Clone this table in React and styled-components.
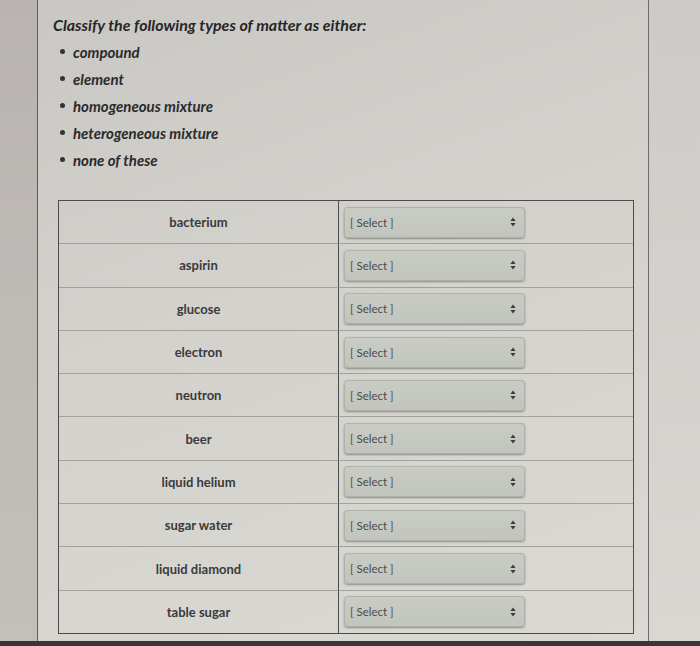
import React from "react";
import styled, { createGlobalStyle } from "styled-components";

const Global = createGlobalStyle`
  html, body { margin: 0; padding: 0; }
  body {
    width: 700px;
    height: 646px;
    overflow: hidden;
    font-family: Lato, "Open Sans", sans-serif;
    background: linear-gradient(160deg, #c9c7c3 0%, #d3d1cc 40%, #dbd9d4 100%);
  }
`;

const Screen = styled.div`
  width: 700px;
  height: 646px;
  display: flex;
  flex-direction: column;
`;

const Row = styled.div`
  flex: 1;
  display: flex;
  min-height: 0;
`;

const Rail = styled.div`
  width: 37px;
  flex: none;
  background: linear-gradient(180deg, #b9b4b1 0%, #c3c0bb 100%);
  border-right: 1px solid #5e5a58;
`;

const Main = styled.div`
  width: 611px;
  flex: none;
  border-right: 1px solid #6e6c6a;
  padding: 15px 0 0 15px;
  box-sizing: border-box;
`;

const Gutter = styled.div`
  flex: 1;
  background: linear-gradient(180deg, #cdcbc7 0%, #d9d7d2 100%);
`;

const BottomBar = styled.div`
  height: 5px;
  background: #3a3634;
`;

const Heading = styled.div`
  font-weight: 700;
  font-style: italic;
  font-size: 16px;
  line-height: 20px;
  color: #262628;
`;

const List = styled.ul`
  list-style: none;
  margin: 3px 0 0 0;
  padding: 0 0 0 7px;
`;

const Item = styled.li`
  display: flex;
  align-items: center;
  gap: 8px;
  height: 27px;
  font-weight: 700;
  font-style: italic;
  font-size: 15px;
  color: #2a2a2c;
  &::before {
    content: "";
    width: 5px;
    height: 5px;
    border-radius: 50%;
    background: #333;
  }
`;

const Table = styled.div`
  margin: 27px 0 0 5px;
  width: 574px;
  border: 1px solid #4e4c4a;
  display: grid;
  grid-template-columns: 280px 1fr;
`;

const NameCell = styled.div`
  height: 42.3px;
  display: flex;
  align-items: center;
  justify-content: center;
  font-size: 13px;
  font-weight: 700;
  color: #3a3a3c;
  border-right: 1px solid #4e4c4a;
  border-top: ${(p) => (p.$first ? "none" : "1px solid #a3a19d")};
`;

const SelectCell = styled.div`
  height: 42.3px;
  display: flex;
  align-items: center;
  padding-left: 5px;
  border-top: ${(p) => (p.$first ? "none" : "1px solid #a3a19d")};
`;

const SelectBox = styled.div`
  width: 181px;
  height: 31px;
  box-sizing: border-box;
  border-radius: 4px;
  background: linear-gradient(180deg, #c9ccc4 0%, #c2c5bd 100%);
  box-shadow: 0 1px 2px rgba(0, 0, 0, 0.35), inset 0 0 0 1px rgba(160, 163, 156, 0.6);
  display: flex;
  align-items: center;
  justify-content: space-between;
  padding: 0 9px 0 6px;
  font-size: 11.5px;
  color: #4a4b4c;
`;

const Arrows = () => (
  <svg width="6" height="10" viewBox="0 0 6 10">
    <path d="M3 0.5 L5.6 4 L0.4 4 Z" fill="#3c3c3e" />
    <path d="M3 9.5 L5.6 6 L0.4 6 Z" fill="#3c3c3e" />
  </svg>
);

const items = ["compound", "element", "homogeneous mixture", "heterogeneous mixture", "none of these"];
const rows = [
  "bacterium",
  "aspirin",
  "glucose",
  "electron",
  "neutron",
  "beer",
  "liquid helium",
  "sugar water",
  "liquid diamond",
  "table sugar",
];

export default function App() {
  return (
    <Screen>
      <Global />
      <Row>
        <Rail />
        <Main>
          <Heading>Classify the following types of matter as either:</Heading>
          <List>
            {items.map((t) => (
              <Item key={t}>{t}</Item>
            ))}
          </List>
          <Table>
            {rows.map((r, i) => (
              <React.Fragment key={r}>
                <NameCell $first={i === 0}>{r}</NameCell>
                <SelectCell $first={i === 0}>
                  <SelectBox>
                    <span>[ Select ]</span>
                    <Arrows />
                  </SelectBox>
                </SelectCell>
              </React.Fragment>
            ))}
          </Table>
        </Main>
        <Gutter />
      </Row>
      <BottomBar />
    </Screen>
  );
}
